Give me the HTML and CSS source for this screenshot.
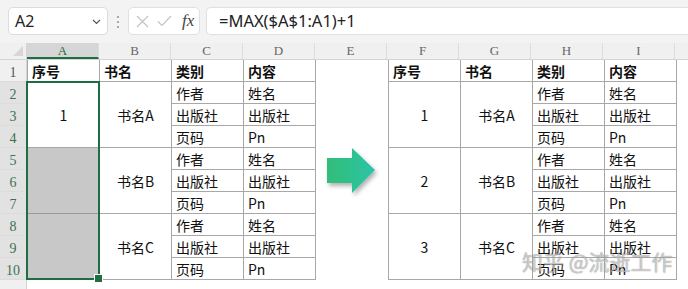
FILE: index.html
```html
<!DOCTYPE html>
<html lang="zh">
<head>
<meta charset="utf-8">
<title>Sheet</title>
<link rel="stylesheet" href="styles.css">
</head>
<body>
<div class="topbar">
  <div class="namebox">
    <span class="ref">A2</span>
    <svg class="chev" width="9" height="6" viewBox="0 0 9 6"><path d="M1 1 L4.5 4.5 L8 1" fill="none" stroke="#555" stroke-width="1.2"/></svg>
  </div>
  <svg class="dots" width="4" height="14" viewBox="0 0 4 14"><circle cx="2" cy="2" r="1.1" fill="#999"/><circle cx="2" cy="7" r="1.1" fill="#999"/><circle cx="2" cy="12" r="1.1" fill="#999"/></svg>
  <div class="fxbox">
    <svg width="13" height="13" viewBox="0 0 13 13"><path d="M1 1 L12 12 M12 1 L1 12" stroke="#c4c4c4" stroke-width="1.2" fill="none"/></svg>
    <svg width="15" height="12" viewBox="0 0 15 12"><path d="M1 6.5 L5 10.5 L14 1" stroke="#c4c4c4" stroke-width="1.2" fill="none"/></svg>
    <span class="fx">fx</span>
  </div>
  <div class="formula">=MAX($A$1:A1)+1</div>
</div>

<div class="sheet">
  <div class="corner"><span class="tri"></span></div>
  <div class="colheads">
    <div class="ch sel">A</div><div class="ch">B</div><div class="ch">C</div><div class="ch">D</div><div class="ch">E</div><div class="ch">F</div><div class="ch">G</div><div class="ch">H</div><div class="ch">I</div><div class="ch rest"></div>
  </div>
  <div class="rowheads">
    <div class="rh">1</div><div class="rh sel">2</div><div class="rh sel">3</div><div class="rh sel">4</div><div class="rh sel">5</div><div class="rh sel">6</div><div class="rh sel">7</div><div class="rh sel">8</div><div class="rh sel">9</div><div class="rh sel">10</div><div class="rh rest"></div>
  </div>
  <div class="body">
    <div class="tbl">
      <div class="c hd">序号</div><div class="c hd">书名</div><div class="c hd">类别</div><div class="c hd">内容</div>
      <div class="c m3 ctr">1</div><div class="c m3 ctr">书名A</div><div class="c">作者</div><div class="c">姓名</div>
      <div class="c">出版社</div><div class="c">出版社</div>
      <div class="c">页码</div><div class="c">Pn</div>
      <div class="c m3 ctr gray"></div><div class="c m3 ctr">书名B</div><div class="c">作者</div><div class="c">姓名</div>
      <div class="c">出版社</div><div class="c">出版社</div>
      <div class="c">页码</div><div class="c">Pn</div>
      <div class="c m3 ctr gray"></div><div class="c m3 ctr">书名C</div><div class="c">作者</div><div class="c">姓名</div>
      <div class="c">出版社</div><div class="c">出版社</div>
      <div class="c">页码</div><div class="c">Pn</div>
      <div class="selection"></div>
    </div>
    <div class="gapcol">
      <svg class="arrow" width="64" height="62" viewBox="0 0 64 62">
        <defs>
          <linearGradient id="ag" x1="0" y1="0" x2="1" y2="0">
            <stop offset="0" stop-color="#31bd78"/>
            <stop offset="1" stop-color="#2cc4a6"/>
          </linearGradient>
          <filter id="sh" x="-20%" y="-20%" width="150%" height="150%">
            <feDropShadow dx="2" dy="3" stdDeviation="2.2" flood-color="#000" flood-opacity="0.3"/>
          </filter>
        </defs>
        <path d="M5 15 H30 V5 L53 27 L30 50 V40 H5 Z" fill="url(#ag)" filter="url(#sh)"/>
      </svg>
    </div>
    <div class="tbl">
      <div class="c hd">序号</div><div class="c hd">书名</div><div class="c hd">类别</div><div class="c hd">内容</div>
      <div class="c m3 ctr">1</div><div class="c m3 ctr">书名A</div><div class="c">作者</div><div class="c">姓名</div>
      <div class="c">出版社</div><div class="c">出版社</div>
      <div class="c">页码</div><div class="c">Pn</div>
      <div class="c m3 ctr">2</div><div class="c m3 ctr">书名B</div><div class="c">作者</div><div class="c">姓名</div>
      <div class="c">出版社</div><div class="c">出版社</div>
      <div class="c">页码</div><div class="c">Pn</div>
      <div class="c m3 ctr">3</div><div class="c m3 ctr">书名C</div><div class="c">作者</div><div class="c">姓名</div>
      <div class="c">出版社</div><div class="c">出版社</div>
      <div class="c">页码</div><div class="c">Pn</div>
    </div>
  </div>
  <div class="watermark">知乎 @流逝工作</div>
</div>
</body>
</html>
```

FILE: styles.css
```css
* { box-sizing: border-box; }
html, body { margin: 0; padding: 0; }
body {
  width: 688px;
  height: 289px;
  overflow: hidden;
  background: #ffffff;
  font-family: "Noto Sans CJK SC", "Noto Sans", sans-serif;
  color: #111;
}

.topbar {
  height: 43px;
  background: #f3f3f3;
  display: flex;
  align-items: flex-start;
  padding: 7px 0 0 8px;
  overflow: hidden;
}
.namebox {
  width: 100px;
  height: 28px;
  background: #fff;
  border: 1px solid #dcdcdc;
  border-radius: 5px;
  display: flex;
  align-items: center;
  justify-content: space-between;
  padding: 0 6px 0 6px;
}
.ref {
  font-family: "Noto Sans", sans-serif;
  font-size: 16px;
  color: #222;
}
.chev { margin-top: 2px; }
.dots { margin: 8px 8px 0 8px; }
.fxbox {
  width: 72px;
  height: 28px;
  background: #fff;
  border: 1px solid #e0e0e0;
  border-radius: 5px;
  display: flex;
  align-items: center;
  gap: 8px;
  padding-left: 7px;
}
.fx {
  font-family: "Liberation Serif", serif;
  font-style: italic;
  font-size: 17px;
  color: #444;
  margin-left: 2px;
}
.formula {
  flex: 1;
  min-width: 0;
  height: 28px;
  margin-left: 6px;
  background: #fff;
  border: 1px solid #e0e0e0;
  border-right: none;
  border-radius: 5px 0 0 5px;
  padding-left: 12px;
  font-family: "Noto Sans", sans-serif;
  font-size: 16.5px;
  line-height: 26px;
  color: #222;
}

.sheet {
  position: relative;
  display: grid;
  grid-template-columns: 27px 1fr;
  grid-template-rows: 17px 1fr;
  height: 246px;
  overflow: hidden;
}
.corner {
  background: #f0f0f0;
  border-bottom: 1px solid #d4d4d4;
  border-right: 1px solid #d4d4d4;
  position: relative;
}
.tri {
  position: absolute;
  right: 3px;
  bottom: 3px;
  width: 0;
  height: 0;
  border-left: 10px solid transparent;
  border-bottom: 10px solid #d6d6d6;
}
.colheads {
  display: flex;
  background: #f0f0f0;
  border-bottom: 1px solid #d4d4d4;
  min-width: 0;
}
.ch {
  width: 72px;
  flex: none;
  border-right: 1px solid #dcdcdc;
  text-align: center;
  font-family: "Liberation Serif", serif;
  font-size: 13px;
  line-height: 16px;
  color: #666;
}
.ch.sel {
  background: #d6d6d6;
  color: #1f6e43;
  border-bottom: 2px solid #1f6e43;
}
.ch.rest { flex: 1; border-right: none; }
.rowheads {
  display: flex;
  flex-direction: column;
  background: #f0f0f0;
}
.rh {
  height: 22px;
  flex: none;
  border-bottom: 1px solid #dcdcdc;
  border-right: 1px solid #d4d4d4;
  text-align: center;
  font-family: "Liberation Serif", serif;
  font-size: 14px;
  line-height: 26px;
  color: #555;
}
.rh.sel {
  background: #e2e2e2;
  color: #3d7050;
}
.rh.rest { flex: 1; border-bottom: none; background: #f0f0f0; }

.body {
  display: flex;
  align-items: flex-start;
  min-width: 0;
}
.tbl {
  display: grid;
  grid-template-columns: repeat(4, 72px);
  grid-template-rows: repeat(10, 22px);
  border-left: 1px solid #a8a8a8;
  position: relative;
}
.c {
  border-right: 1px solid #a8a8a8;
  border-bottom: 1px solid #a8a8a8;
  display: flex;
  align-items: center;
  padding: 1px 0 0 4px;
  font-size: 14px;
  color: #111;
  white-space: nowrap;
}
.hd { font-weight: bold; }
.m3 { grid-row: span 3; }
.ctr { justify-content: center; padding-left: 0; }
.gray { background: #c8c8c8; border-bottom-color: #9a9a9a; }
.selection {
  position: absolute;
  left: -2px;
  top: 21px;
  width: 74px;
  height: 199px;
  border: 2px solid #1f6e43;
  z-index: 2;
}
.selection::after {
  content: "";
  position: absolute;
  right: -5px;
  bottom: -5px;
  width: 7px;
  height: 7px;
  background: #1f6e43;
  border: 1px solid #fff;
}
.gapcol {
  width: 72px;
  flex: none;
  position: relative;
  height: 220px;
}
.arrow {
  position: absolute;
  left: 6px;
  top: 83px;
}
.watermark {
  position: absolute;
  left: 522px;
  top: 203px;
  font-size: 21px;
  color: rgba(255, 255, 255, 0.55);
  text-shadow: 0 0 1px rgba(0,0,0,0.35), 0 0 1px rgba(0,0,0,0.25);
  white-space: nowrap;
  z-index: 3;
}
```
